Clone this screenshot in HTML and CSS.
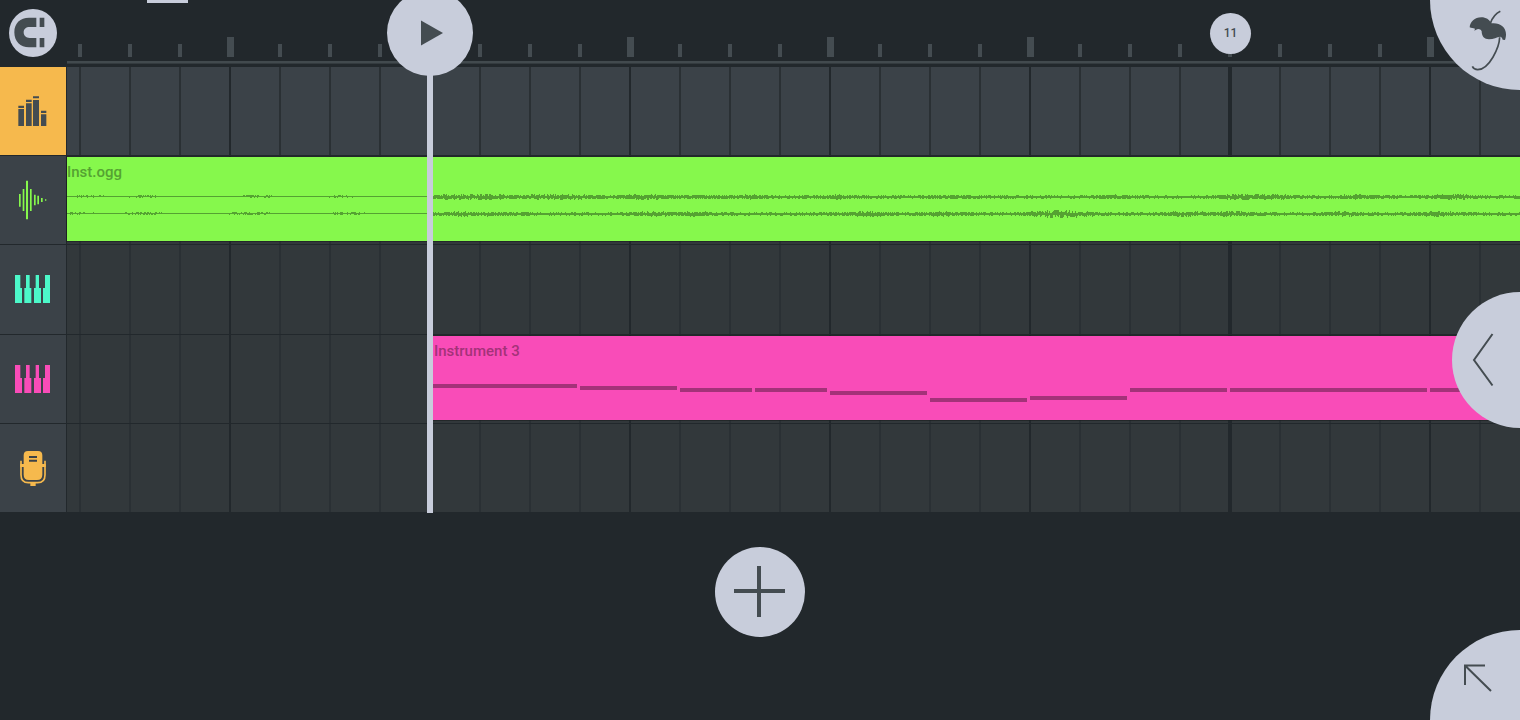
FILE: index.html
```html
<!DOCTYPE html>
<html lang="en">
<head>
<meta charset="utf-8">
<meta name="viewport" content="width=device-width, initial-scale=1">
<title>Playlist</title>
<link rel="stylesheet" href="styles.css">
</head>
<body>
<main id="playlist">
	<header>
		<div class="corner">
			<button class="round snap" aria-label="Snap to grid">
				<svg width="48" height="48" viewBox="0 0 144 144">
					<path d="M82 26H60C34 26 16 42 16 70s18 45 44 45h22V87H62c-11 0-18-7-18-17s7-16 18-16h20z"/>
					<path d="M92 26h14v28H92zM92 87h14v28H92z"/>
				</svg>
			</button>
		</div>
		<div class="ruler">
			<svg id="ticks" width="100%" height="20"></svg>
		</div>
	</header>

	<div class="tracks">
		<section class="track selected">
			<button class="head" aria-label="Drums">
				<svg width="30" height="31" viewBox="0 0 90 93">
					<path d="M1 39h17v51H1zM1 29h17v7H1zM24 22h17v68H24zM24 11h17v7H24zM45 12h18v78H45zM45 1h18v6H45zM69 55h16v35H69zM69 44h16v7H69z"/>
				</svg>
			</button>
			<div class="lane"></div>
		</section>
		<section class="track green">
			<button class="head" aria-label="Inst.ogg">
				<svg width="30" height="40" viewBox="0 0 90 120">
					<path d="M3 42h5v38H3zM14 27h5v66h-5zM24 2h6v116h-6zM36 27h5v66h-5zM48 44h5v32h-5zM58 47h5v26h-5zM69 54h5v12h-5zM81 58h4v4h-4z"/>
				</svg>
			</button>
			<div class="lane">
				<div class="clip">
					<span class="name">Inst.ogg</span>
					<svg id="wave" width="100%" height="84"></svg>
				</div>
			</div>
		</section>
		<section class="track teal">
			<button class="head" aria-label="Instrument 2">
				<svg width="35" height="28" viewBox="0 0 105 84">
					<path d="M0 0h16v39h5v45H0zM33 0h11v39h5v45H28V39h5zM62 0h10v39h6v45H57V39h5zM90 0h15v84H84V39h6z"/>
				</svg>
			</button>
			<div class="lane"></div>
		</section>
		<section class="track pink">
			<button class="head" aria-label="Instrument 3">
				<svg width="35" height="28" viewBox="0 0 105 84">
					<path d="M0 0h16v39h5v45H0zM33 0h11v39h5v45H28V39h5zM62 0h10v39h6v45H57V39h5zM90 0h15v84H84V39h6z"/>
				</svg>
			</button>
			<div class="lane">
				<div class="clip at-playhead">
					<span class="name">Instrument 3</span>
					<svg id="notes" width="100%" height="84"></svg>
				</div>
			</div>
		</section>
		<section class="track orange">
			<button class="head" aria-label="Microphone">
				<svg width="26" height="36" viewBox="0 0 78 108">
					<path fill-rule="evenodd" d="M24 3h30q13 0 13 13v58q0 16-16 16H27Q11 90 11 74V16Q11 3 24 3zM27 18v6h24v-6zM27 29v6h24v-6z"/>
					<path d="M3 32v42q0 24 22 24h28q22 0 22-24V32" fill="none" stroke="currentColor" stroke-width="5"/>
					<path d="M1 42h76v9H1zM31 98h16v10H31z"/>
				</svg>
			</button>
			<div class="lane"></div>
		</section>
	</div>

	<div class="overview"></div>
	<div class="marker">11</div>
	<div class="playhead">
		<button class="round play" aria-label="Play">
			<svg width="22" height="26" viewBox="0 0 22 26"><path d="M0 0.500L22 13 0 25.500z"/></svg>
		</button>
	</div>
</main>

<button class="round add" aria-label="Add track">
	<svg width="52" height="52" viewBox="0 0 52 52"><path d="M23 0h4v23h24v4H27v24h-4V27H0v-4h23z"/></svg>
</button>

<button class="round edge top" aria-label="Home">
	<svg width="40" height="62" viewBox="0 0 120 186">
		<path d="M5 52C6 36 20 22 40 22c14 0 24 7 30 18 24-3 44 10 44 33 0 7-1 12-3 17l-7-1c-1-5-3-8-7-9-11 1-20 8-34 8C49 88 41 79 41 64c-2-5-6-7-10-7-5 1-8 3-12 5l2-6c-6-2-11-2-16-4z"/>
		<path d="M67 40C73 24 84 10 97 4M95 82C94 112 64 179 29 179c-8 0-13-4-16-10" fill="none" stroke="currentColor" stroke-width="5"/>
	</svg>
</button>
<button class="round edge middle" aria-label="Show panel">
	<svg width="22" height="54" viewBox="0 0 22 54"><path d="M20.500 1L2 27l18.500 25.500" fill="none" stroke="currentColor" stroke-width="2"/></svg>
</button>
<button class="round edge bottom" aria-label="Expand">
	<svg width="28" height="28" viewBox="0 0 28 28"><path d="M1 21V1.500h20M1 1.500L27 27" fill="none" stroke="currentColor" stroke-width="2"/></svg>
</button>

<script src="playlist.js"></script>
</body>
</html>
```
FILE: styles.css
```css
html, body { margin: 0; padding: 0; }
body { min-height: 100vh; overflow: hidden; background: #22282c; color: #444c51; font: 500 15px/20px Roboto, sans-serif; }
button { margin: 0; padding: 0; border: 0; color: inherit; font: inherit; cursor: pointer; }
svg { display: block; fill: currentColor; }

.round { display: flex; align-items: center; justify-content: center; border-radius: 50%; background: #c8cddb; }

#playlist { position: relative; overflow: hidden; }
header { display: flex; height: 67px; }
.corner { display: flex; align-items: center; justify-content: center; box-sizing: border-box; width: 67px; padding: 0 1px 1px 0; }
.snap { width: 48px; height: 48px; }
.ruler { flex: 1; height: 24px; margin-top: 37px; border-bottom: 2px solid #424a4e; box-shadow: 0 1px #343b3f; }

.tracks { display: grid; grid-template-rows: repeat(5, 1fr); min-height: 446px; }
.track { display: flex; border-bottom: 1px solid #22282c; }
.head { display: flex; align-items: center; justify-content: center; box-sizing: border-box; width: 67px; padding-right: 1px; border-right: 1px solid #22282c; background: #3b4248; }
.lane {
	flex: 1; padding-top: 1px; background-color: #32383b;
	background-image:
		linear-gradient(90deg, #22282c 4px, transparent 4px),
		linear-gradient(90deg, #22282c 2px, transparent 2px),
		linear-gradient(90deg, #2a3034 2px, transparent 2px);
	background-size: 800px 100%, 200px 100%, 50px 100%;
	background-position: 361px 0, 162px 0, 12px 0;
}
.selected .head { background: #f6b94d; }
.selected .lane { background-color: #3b4248; }
.green .head { color: #86f84c; }
.teal .head { color: #4cf8c9; }
.pink .head { color: #f94cb8; }
.orange .head { color: #f6b94d; }

.clip { position: relative; height: 84px; box-shadow: 0 0 0 1px rgba(25, 30, 30, 0.6); }
.green .clip { background: #86f84c; color: #55a232; }
.pink .clip { background: #f94cb8; color: #a43279; }
.at-playhead { margin-left: 363px; }
.name { position: absolute; top: 5px; left: 0; }
.at-playhead .name { left: 4px; }

/* things that float over the timeline */
.overview { position: absolute; top: 0; left: 147px; width: 41px; height: 3px; background: #c8cddb; }
.marker { position: absolute; top: 13px; left: 1210px; width: 41px; border-radius: 50%; background: #c8cddb; text-align: center; font-size: 12px; line-height: 41px; }
.playhead { position: absolute; top: 0; bottom: 0; left: 427px; display: flex; justify-content: center; width: 6px; background: #c8cddb; }
.play { flex: none; width: 86px; height: 86px; margin-top: -10px; }
.play svg { margin-left: 4px; }

.add { width: 90px; height: 90px; margin: 34px auto 0; }

.edge { position: fixed; right: 0; width: 90px; height: 90px; }
.edge.top { top: 0; border-radius: 0 0 0 100%; }
.edge.top svg { margin: -8px 0 0 26px; }
.edge.middle { top: calc(50% - 68px); width: 68px; height: 136px; border-radius: 68px 0 0 68px; }
.edge.middle svg { margin-right: 6px; }
.edge.bottom { bottom: 0; border-radius: 100% 0 0 0; }
.edge.bottom svg { margin: 6px 0 0 6px; }
```
FILE: playlist.js
```js
var BEAT = 50    // pixels per beat
var START = 13   // first visible beat
var WIDTH = 3000 // drawn length, the clip cuts off the rest
var LOUD = 363   // where the recording gets louder

// [start, length, top], pixels from the start of the clip
var notes = [
	[0, 147, 48], [150, 97, 50], [250, 72, 52], [325, 72, 52], [400, 97, 55],
	[500, 97, 62], [600, 97, 60], [700, 97, 52], [800, 197, 52], [1000, 197, 52]
]

// [x, loudness] swells of each channel
var left  = [[20, 0.6], [80, 0.6], [190, 0.7], [270, 0.5], [385, 1.4], [420, 1.6], [470, 1], [505, 1.2], [575, 1.6], [640, 0.8], [685, 0.9], [768, 1], [890, 0.8], [1050, 0.9], [1175, 1.5], [1215, 1], [1290, 1.3], [1385, 1.6]]
var right = [[10, 0.6], [75, 0.8], [180, 1], [280, 0.7], [390, 1], [430, 0.8], [585, 1], [630, 1], [800, 1.4], [875, 1.2], [985, 2.4], [1010, 1.4], [1115, 1.4], [1165, 1.6], [1275, 1.2], [1370, 1.3]]

function $(id) { return document.getElementById(id) }

function rect(x, y, w, h) {
	return '<rect x="'+x+'" y="'+y+'" width="'+w+'" height="'+h+'"/>'
}

function drawTicks() {
	var html = ''
	for(var i = 0; START + i*BEAT < WIDTH; i++) {
		var x = START + i*BEAT
		var isBar = i % 4 == 3 && i != 23
		html += isBar ? rect(x-3, 0, 7, 20) : rect(x-2, 7, 4, 13)
	}
	$('ticks').innerHTML = html
}

function drawNotes() {
	$('notes').innerHTML = notes.map(function(n) { return rect(n[0], n[2], n[1], 4) }).join('')
}

var seed = 7
function random() {
	seed = (seed * 16807) % 2147483647
	return seed / 2147483647
}

function channel(y, swells) {
	var html = ''
	for(var x = 0; x < WIDTH; x++) {
		var loud = x < LOUD ? 0.2 : 0.7
		swells.forEach(function(s) {
			loud += s[1] * Math.exp(-Math.pow((x-s[0])/22, 2))
		})
		var up   = Math.round(random() * loud)
		var down = Math.round(random() * loud)
		html += rect(x, y-up, 1, (x < LOUD ? 1 : 2)+up+down)
	}
	return html
}

drawTicks()
drawNotes()
$('wave').innerHTML = channel(39, left) + channel(56, right)
```
